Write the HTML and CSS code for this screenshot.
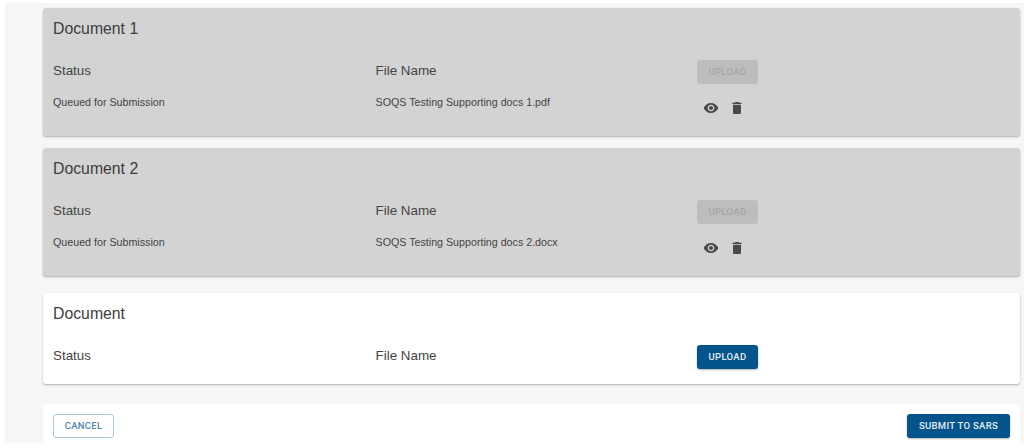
FILE: index.html
```html
<!DOCTYPE html>
<html lang="en">
<head>
<meta charset="utf-8">
<title>Documents</title>
<link rel="stylesheet" href="styles.css">
</head>
<body>
<main class="page">
  <section class="card card-disabled card-one">
    <h2 class="title">Document 1</h2>
    <div class="grid">
      <div class="label">Status</div>
      <div class="label">File Name</div>
      <div><button class="btn btn-off">UPLOAD</button></div>
      <div class="value">Queued for Submission</div>
      <div class="value">SOQS Testing Supporting docs 1.pdf</div>
      <div class="icons">
        <svg class="icon" viewBox="0 0 24 24"><path d="M12 4.5C7 4.5 2.73 7.61 1 12c1.73 4.39 6 7.5 11 7.5s9.27-3.11 11-7.5c-1.73-4.39-6-7.5-11-7.5zM12 17c-2.76 0-5-2.24-5-5s2.24-5 5-5 5 2.24 5 5-2.24 5-5 5zm0-8c-1.66 0-3 1.34-3 3s1.34 3 3 3 3-1.34 3-3-1.34-3-3-3z"/></svg>
        <svg class="icon" viewBox="0 0 24 24"><path d="M6 19c0 1.1.9 2 2 2h8c1.1 0 2-.9 2-2V7H6v12zM19 4h-3.5l-1-1h-5l-1 1H5v2h14V4z"/></svg>
      </div>
    </div>
  </section>
  <section class="card card-disabled card-two">
    <h2 class="title">Document 2</h2>
    <div class="grid">
      <div class="label">Status</div>
      <div class="label">File Name</div>
      <div><button class="btn btn-off">UPLOAD</button></div>
      <div class="value">Queued for Submission</div>
      <div class="value">SOQS Testing Supporting docs 2.docx</div>
      <div class="icons">
        <svg class="icon" viewBox="0 0 24 24"><path d="M12 4.5C7 4.5 2.73 7.61 1 12c1.73 4.39 6 7.5 11 7.5s9.27-3.11 11-7.5c-1.73-4.39-6-7.5-11-7.5zM12 17c-2.76 0-5-2.24-5-5s2.24-5 5-5 5 2.24 5 5-2.24 5-5 5zm0-8c-1.66 0-3 1.34-3 3s1.34 3 3 3 3-1.34 3-3-1.34-3-3-3z"/></svg>
        <svg class="icon" viewBox="0 0 24 24"><path d="M6 19c0 1.1.9 2 2 2h8c1.1 0 2-.9 2-2V7H6v12zM19 4h-3.5l-1-1h-5l-1 1H5v2h14V4z"/></svg>
      </div>
    </div>
  </section>
  <section class="card card-three">
    <h2 class="title">Document</h2>
    <div class="grid">
      <div class="label">Status</div>
      <div class="label">File Name</div>
      <div><button class="btn btn-on">UPLOAD</button></div>
    </div>
  </section>
  <footer class="card actions">
    <button class="btn btn-outline">CANCEL</button>
    <button class="btn btn-on btn-submit">SUBMIT TO SARS</button>
  </footer>
</main>
</body>
</html>
```
FILE: styles.css
```css
html, body { margin: 0; padding: 0; background: #fff; height: 448px; overflow: hidden; }
body { font-family: "Liberation Sans", Arial, sans-serif; color: #333; padding-left: 5px; padding-top: 3px; box-sizing: border-box; }
.page { background: #f6f6f6; height: 440px; overflow: hidden; padding: 5px 4px 0 38px; box-sizing: border-box; display: flex; flex-direction: column; }
.card { background: #fff; border-radius: 3px; box-shadow: 0 1px 2px rgba(0,0,0,.3); padding: 0 10px; flex: none; box-sizing: border-box; }
.card-disabled { background: #d3d3d3; }
.card-one { height: 128px; margin-bottom: 12px; }
.card-two { height: 128px; margin-bottom: 17px; }
.card-three { height: 91px; margin-bottom: 20px; }
.title { font-size: 15.8px; font-weight: 400; line-height: 20px; margin: 0; padding: 11px 0 0 0; color: #3d3d3d; }
.grid { display: grid; grid-template-columns: 322.5px 321.5px 1fr; grid-auto-rows: auto; margin-top: 21px; }
.label { font-size: 13.4px; line-height: 21px; color: #444; height: 24px; }
.value { font-size: 10.7px; line-height: 16px; color: #444; margin-top: 10px; }
.btn { font-family: Roboto, "Liberation Sans", sans-serif; font-size: 9.5px; font-weight: 500; letter-spacing: .3px; border-radius: 3px; height: 24px; box-sizing: border-box; border: 0; padding: 0 0 1px; cursor: pointer; display: block; }
.btn-off { width: 61px; background: #bdbdbd; color: #a6a6a6; }
.btn-on { width: 61px; background: #02548b; color: #e6eef4; box-shadow: 0 1px 2px rgba(0,0,0,.3); }
.btn-outline { width: 61px; background: #fff; border: 1px solid #a9c8de; color: #4f86ab; }
.btn-submit { width: 103px; }
.icons { display: flex; gap: 10px; margin-top: 16px; padding-left: 6px; }
.icon { width: 16px; height: 16px; fill: #4a4a4a; display: block; }
.actions { height: 60px; display: flex; justify-content: space-between; align-items: flex-start; padding-top: 10px; box-shadow: none; }
```
